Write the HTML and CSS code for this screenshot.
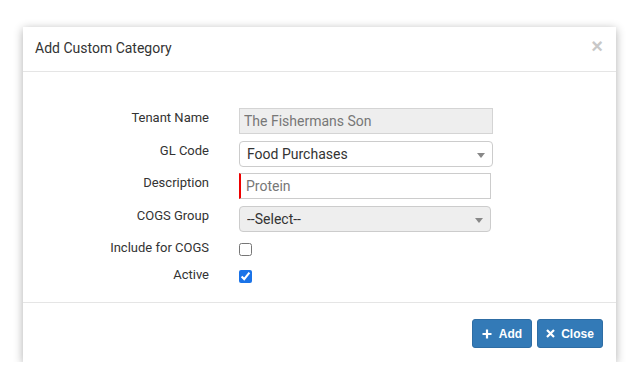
FILE: index.html
```html
<!DOCTYPE html>
<html lang="en">
<head>
<meta charset="utf-8">
<title>Add Custom Category</title>
<link rel="stylesheet" href="styles.css">
</head>
<body>
<div class="modal">
  <div class="modal-header">
    <h4 class="modal-title">Add Custom Category</h4>
    <button class="close-x" type="button" aria-label="Close">&times;</button>
  </div>
  <div class="modal-body">
    <form class="form">
      <div class="row r1">
        <label class="lbl">Tenant Name</label>
        <input class="ctl ctl-disabled" type="text" value="The Fishermans Son" readonly>
      </div>
      <div class="row r2">
        <label class="lbl">GL Code</label>
        <span class="sel-wrap"><select class="ctl sel"><option>Food Purchases</option></select></span>
      </div>
      <div class="row r3">
        <label class="lbl">Description</label>
        <input class="ctl ctl-req" type="text" value="Protein">
      </div>
      <div class="row r4">
        <label class="lbl">COGS Group</label>
        <span class="sel-wrap narrow"><select class="ctl sel sel-grey"><option>--Select--</option></select></span>
      </div>
      <div class="row r5">
        <label class="lbl">Include for COGS</label>
        <span class="cb-cell"><input class="cb" type="checkbox"></span>
      </div>
      <div class="row r6">
        <label class="lbl">Active</label>
        <span class="cb-cell"><input class="cb" type="checkbox" checked></span>
      </div>
    </form>
  </div>
  <div class="modal-footer">
    <button class="btn btn-add" type="button"><svg class="ico" width="10" height="10" viewBox="0 0 10 10"><path d="M5 0.5V9.5M0.5 5H9.5" stroke="#fff" stroke-width="2.2" fill="none"/></svg>Add</button>
    <button class="btn btn-close" type="button"><svg class="ico" width="9" height="9" viewBox="0 0 9 9"><path d="M1 1L8 8M8 1L1 8" stroke="#fff" stroke-width="2.2" fill="none"/></svg>Close</button>
  </div>
</div>
</body>
</html>
```
FILE: styles.css
```css
* { box-sizing: border-box; }
html, body { margin: 0; background: #fff; }
body {
  padding: 27px 0 0 23px;
  font-family: Roboto, "Liberation Sans", sans-serif;
  color: #333;
}
.modal {
  width: 593px;
  height: 335px;
  background: #fff;
  box-shadow: 0 2px 9px rgba(0,0,0,0.32);
  display: flex;
  flex-direction: column;
}
.modal-header {
  height: 45px;
  border-bottom: 1px solid #e5e5e5;
  display: flex;
  align-items: center;
  justify-content: space-between;
  padding: 0 13px 2px 12px;
}
.modal-title {
  margin: 0;
  font-size: 14px;
  font-weight: 400;
  line-height: 20px;
  color: #333;
}
.close-x {
  border: 0;
  background: none;
  padding: 0;
  font-family: "Liberation Sans", sans-serif;
  font-size: 20px;
  font-weight: 700;
  line-height: 20px;
  color: #c8c8c8;
  margin-top: -5px;
}
.modal-body {
  height: 231px;
  padding: 36px 0 0 15px;
  border-bottom: 1px solid #e5e5e5;
}
.form { margin: 0; }
.row {
  display: grid;
  grid-template-columns: 171px 254px;
  column-gap: 30px;
  align-items: start;
}
.r1, .r2, .r3, .r4 { height: 26px; }
.r1 { margin-bottom: 7px; }
.r2 { margin-bottom: 6px; }
.r3 { margin-bottom: 7px; }
.r4 { margin-bottom: 6px; }
.r5 { height: 18px; margin-bottom: 9px; }
.r6 { height: 18px; }
.lbl {
  text-align: right;
  font-size: 13px;
  line-height: 18px;
  padding-top: 1px;
  color: #333;
}
.ctl {
  display: block;
  width: 254px;
  height: 26px;
  margin: 0;
  border: 1px solid #ccc;
  background: #fff;
  font-family: Roboto, "Liberation Sans", sans-serif;
  font-size: 14px;
  color: #333;
  outline: none;
}
.ctl-disabled {
  background: #eee;
  color: #777;
  padding: 0 4px;
  border-color: #d4d4d4;
}
.ctl-req {
  width: 252px;
  border-left: 2px solid #e00;
  padding: 0 5px;
  color: #777;
}
.sel-wrap { position: relative; display: block; width: 254px; }
.sel-wrap.narrow { width: 252px; }
.sel {
  appearance: none;
  -webkit-appearance: none;
  border-radius: 4px;
  padding: 0 7px;
  width: 100%;
}
.sel-grey { background: #eee; }
.sel-wrap::after {
  content: "";
  position: absolute;
  right: 8px;
  top: 12px;
  border-left: 4px solid transparent;
  border-right: 4px solid transparent;
  border-top: 5px solid #888;
  pointer-events: none;
}
.cb-cell { display: block; height: 18px; }
.cb {
  display: block;
  width: 13px;
  height: 13px;
  margin: 5px 0 0 0;
  accent-color: #1a73e8;
}
.modal-footer {
  flex: 1;
  display: flex;
  justify-content: flex-end;
  align-items: flex-start;
  gap: 5px;
  padding: 16px 13px 0 0;
}
.btn {
  height: 29px;
  display: inline-flex;
  align-items: center;
  justify-content: center;
  border: 1px solid #2e6da4;
  border-radius: 3px;
  background: #337ab7;
  color: #fff;
  font-family: "Liberation Sans", Arial, sans-serif;
  font-size: 12px;
  font-weight: 700;
  padding: 0;
}
.btn-add { width: 60px; }
.btn-close { width: 66px; }
.ico { display: block; margin-right: 7px; }
.btn-close .ico { margin-right: 6px; }
```
